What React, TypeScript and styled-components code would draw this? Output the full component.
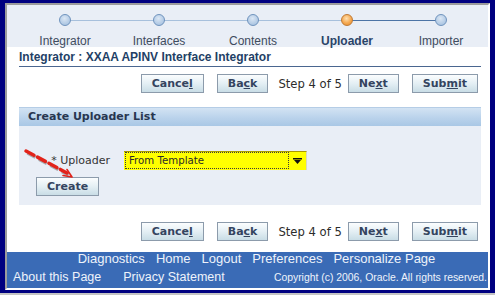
import styled, { createGlobalStyle, css } from "styled-components";

const GlobalStyle = createGlobalStyle`
    html, body {
        margin: 0;
        padding: 0;
        background: #c4c4c4;
    }
    body {
        width: 495px;
        height: 295px;
        overflow: hidden;
    }
`;

const Frame = styled.div`
    width: 495px;
    box-sizing: border-box;
    border-style: solid;
    border-color: #000080;
    border-width: 3px 5px 3px 5px;
    background: #fff;
`;

const Inner = styled.div`
    border-style: solid;
    border-width: 2px;
    border-color: #9c9c9c #ffffff #ffffff #9c9c9c;
    background: #fff;
    font-family: "Liberation Sans", Arial, sans-serif;
`;

/* ---------- train ---------- */

type StepState = "done" | "current" | "todo";

const Train = styled.div`
    height: 42px;
    background: #e9eef6;
    display: flex;
    padding-left: 11px;
`;

const Step = styled.div`
    width: 95px;
    display: flex;
    flex-direction: column;
    align-items: center;
`;

const DotRow = styled.div<{ $left?: string; $right?: string }>`
    position: relative;
    width: 100%;
    height: 12px;
    margin-top: 9px;
    display: flex;
    justify-content: center;
    &::before, &::after {
        content: "";
        position: absolute;
        top: 6px;
        height: 1px;
        width: 50%;
    }
    &::before {
        left: 0;
        background: ${(p) => p.$left || "transparent"};
    }
    &::after {
        right: 0;
        background: ${(p) => p.$right || "transparent"};
    }
`;

const Dot = styled.div<{ $state: StepState }>`
    position: relative;
    z-index: 1;
    width: 12px;
    height: 12px;
    box-sizing: border-box;
    border-radius: 50%;
    ${(p) =>
        p.$state === "current"
            ? css`
                  background: radial-gradient(circle at 45% 35%, #ffe0b0 0%, #f5a850 55%, #e08a2c 100%);
                  border: 1px solid #c07a35;
              `
            : css`
                  background: radial-gradient(circle at 45% 35%, #dbe7f4 0%, #b5cce6 60%, #a3bfde 100%);
                  border: 1px solid #6f93bd;
              `}
`;

const StepLabel = styled.div<{ $current?: boolean }>`
    margin-top: 8px;
    font-size: 12px;
    line-height: 14px;
    color: ${(p) => (p.$current ? "#2a4468" : "#3f4c5e")};
    font-weight: ${(p) => (p.$current ? "bold" : "normal")};
    white-space: nowrap;
`;

/* ---------- page ---------- */

const Content = styled.div`
    padding: 0 7px 0 12px;
`;

const PageTitle = styled.div`
    padding-top: 3px;
    font-size: 12px;
    line-height: 15px;
    font-weight: bold;
    color: #233f66;
    border-bottom: 1px solid #4a6690;
    padding-bottom: 1px;
`;

const ButtonBar = styled.div<{ $top: number }>`
    display: flex;
    justify-content: flex-end;
    align-items: center;
    margin-top: ${(p) => p.$top}px;
    padding-right: 3px;
    height: 19px;
`;

const Button = styled.button<{ $gap?: number }>`
    box-sizing: border-box;
    height: 19px;
    padding: 0 10px;
    margin-left: ${(p) => p.$gap ?? 0}px;
    border: 1px solid #8c9bab;
    border-radius: 0;
    background: linear-gradient(#fbfdfe 0%, #e4eff4 50%, #c9dde6 100%);
    font-family: "DejaVu Sans", Tahoma, sans-serif;
    font-size: 11px;
    font-weight: bold;
    color: #34445f;
    line-height: 17px;
    cursor: pointer;
    u {
        text-decoration: underline;
        text-underline-offset: 1px;
    }
`;

const StepText = styled.span`
    margin: 0 6px 0 10px;
    font-family: "DejaVu Sans", Tahoma, sans-serif;
    font-size: 11.6px;
    color: #2c2c2c;
    white-space: nowrap;
`;

const SectionHeader = styled.div`
    margin-top: 14px;
    height: 19px;
    box-sizing: border-box;
    border-top: 1px solid #b5cde6;
    background: linear-gradient(#d3e3f3 0%, #bcd4ec 50%, #a9c7e5 100%);
    padding-left: 9px;
    font-family: "DejaVu Sans", Tahoma, sans-serif;
    font-size: 11px;
    font-weight: bold;
    line-height: 18px;
    color: #283650;
`;

const SectionBody = styled.div`
    position: relative;
    height: 79px;
    box-sizing: border-box;
    background: #e9eef6;
    padding: 25px 0 0 17px;
`;

const FieldRow = styled.div`
    display: flex;
    align-items: center;
    height: 19px;
`;

const FieldLabel = styled.label`
    width: 74px;
    text-align: right;
    margin-right: 14px;
    font-family: "DejaVu Sans", Tahoma, sans-serif;
    font-size: 11px;
    color: #333;
    white-space: nowrap;
`;

const Select = styled.div`
    width: 183px;
    height: 19px;
    box-sizing: border-box;
    display: flex;
    background: #ffff00;
    border-top: 1px solid #a89a00;
    border-right: 1px solid #d8d8c0;
`;

const SelectValue = styled.div`
    flex: 1;
    box-sizing: border-box;
    border: 1px dotted #3a3a3a;
    margin: 0 0 1px 1px;
    padding-left: 3px;
    font-family: "DejaVu Sans", Tahoma, sans-serif;
    font-size: 10.2px;
    line-height: 15px;
    color: #2a2a2a;
`;

const SelectArrow = styled.div`
    width: 17px;
    display: flex;
    align-items: center;
    justify-content: center;
`;

const CreateRow = styled.div`
    margin-top: 6px;
`;

const Annotation = styled.svg`
    position: absolute;
    left: 4px;
    top: 22px;
    overflow: visible;
`;

/* ---------- footer ---------- */

const Footer = styled.div`
    margin-top: 11px;
    height: 36px;
    box-sizing: border-box;
    background: #3a6bb6;
    color: #eef3fb;
    font-family: "Liberation Sans", Arial, sans-serif;
`;

const GlobalLinks = styled.div`
    display: flex;
    justify-content: center;
    gap: 11px;
    padding-left: 18px;
    font-size: 13px;
    line-height: 14px;
`;

const FooterBottom = styled.div`
    display: flex;
    align-items: baseline;
    margin-top: 4px;
    padding: 0 1px 0 6px;
    font-size: 12.5px;
    line-height: 14px;
`;

const FooterLink = styled.span<{ $gap?: number }>`
    margin-left: ${(p) => p.$gap ?? 0}px;
    white-space: nowrap;
`;

const Copyright = styled.span`
    margin-left: auto;
    font-size: 10.4px;
    white-space: nowrap;
`;

const steps: { label: string; state: StepState }[] = [
    { label: "Integrator", state: "done" },
    { label: "Interfaces", state: "done" },
    { label: "Contents", state: "done" },
    { label: "Uploader", state: "current" },
    { label: "Importer", state: "todo" },
];

const LIGHT = "#a7c0dc";
const DARK = "#4d74a6";

const Buttons = ({ top }: { top: number }) => (
    <ButtonBar $top={top}>
        <Button>Cance<u>l</u></Button>
        <Button $gap={13}>Ba<u>c</u>k</Button>
        <StepText>Step 4 of 5</StepText>
        <Button>Ne<u>x</u>t</Button>
        <Button $gap={13}>Sub<u>m</u>it</Button>
    </ButtonBar>
);

const App = () => {
    return (
        <>
            <GlobalStyle />
            <Frame>
                <Inner>
                    <Train>
                        {steps.map((s, i) => {
                            const left = i === 0 ? undefined : s.state === "todo" ? DARK : LIGHT;
                            const right =
                                i === steps.length - 1
                                    ? undefined
                                    : steps[i + 1].state === "todo"
                                    ? DARK
                                    : LIGHT;
                            return (
                                <Step key={s.label}>
                                    <DotRow $left={left} $right={right}>
                                        <Dot $state={s.state} />
                                    </DotRow>
                                    <StepLabel $current={s.state === "current"}>{s.label}</StepLabel>
                                </Step>
                            );
                        })}
                    </Train>
                    <Content>
                        <PageTitle>Integrator : XXAA APINV Interface Integrator</PageTitle>
                        <Buttons top={7} />
                        <SectionHeader>Create Uploader List</SectionHeader>
                        <SectionBody>
                            <FieldRow>
                                <FieldLabel>* Uploader</FieldLabel>
                                <Select>
                                    <SelectValue>From Template</SelectValue>
                                    <SelectArrow>
                                        <svg width="9" height="6" viewBox="0 0 9 6">
                                            <rect x="0" y="0" width="9" height="1.5" fill="#111" />
                                            <path d="M1 2 L8 2 L4.5 6 Z" fill="#111" />
                                        </svg>
                                    </SelectArrow>
                                </Select>
                            </FieldRow>
                            <CreateRow>
                                <Button>Create</Button>
                            </CreateRow>
                            <Annotation width="64" height="36" viewBox="0 0 64 36">
                                <g transform="translate(1.5,2)" opacity="0.45">
                                    <line x1="3" y1="3" x2="44" y2="25" stroke="#555" strokeWidth="3.5" strokeDasharray="9 4" />
                                </g>
                                <line x1="3" y1="3" x2="44" y2="25" stroke="#e2231a" strokeWidth="3.5" strokeDasharray="9 4" strokeLinecap="round" />
                                <path d="M49 29 L40 27.5 M49 29 L44 21.5" stroke="#e2231a" strokeWidth="1.6" fill="none" strokeLinecap="round" />
                            </Annotation>
                        </SectionBody>
                        <Buttons top={17} />
                    </Content>
                    <Footer>
                        <GlobalLinks>
                            <span>Diagnostics</span>
                            <span>Home</span>
                            <span>Logout</span>
                            <span>Preferences</span>
                            <span>Personalize Page</span>
                        </GlobalLinks>
                        <FooterBottom>
                            <FooterLink>About this Page</FooterLink>
                            <FooterLink $gap={22}>Privacy Statement</FooterLink>
                            <Copyright>Copyright (c) 2006, Oracle. All rights reserved.</Copyright>
                        </FooterBottom>
                    </Footer>
                </Inner>
            </Frame>
        </>
    );
};

export default App;
